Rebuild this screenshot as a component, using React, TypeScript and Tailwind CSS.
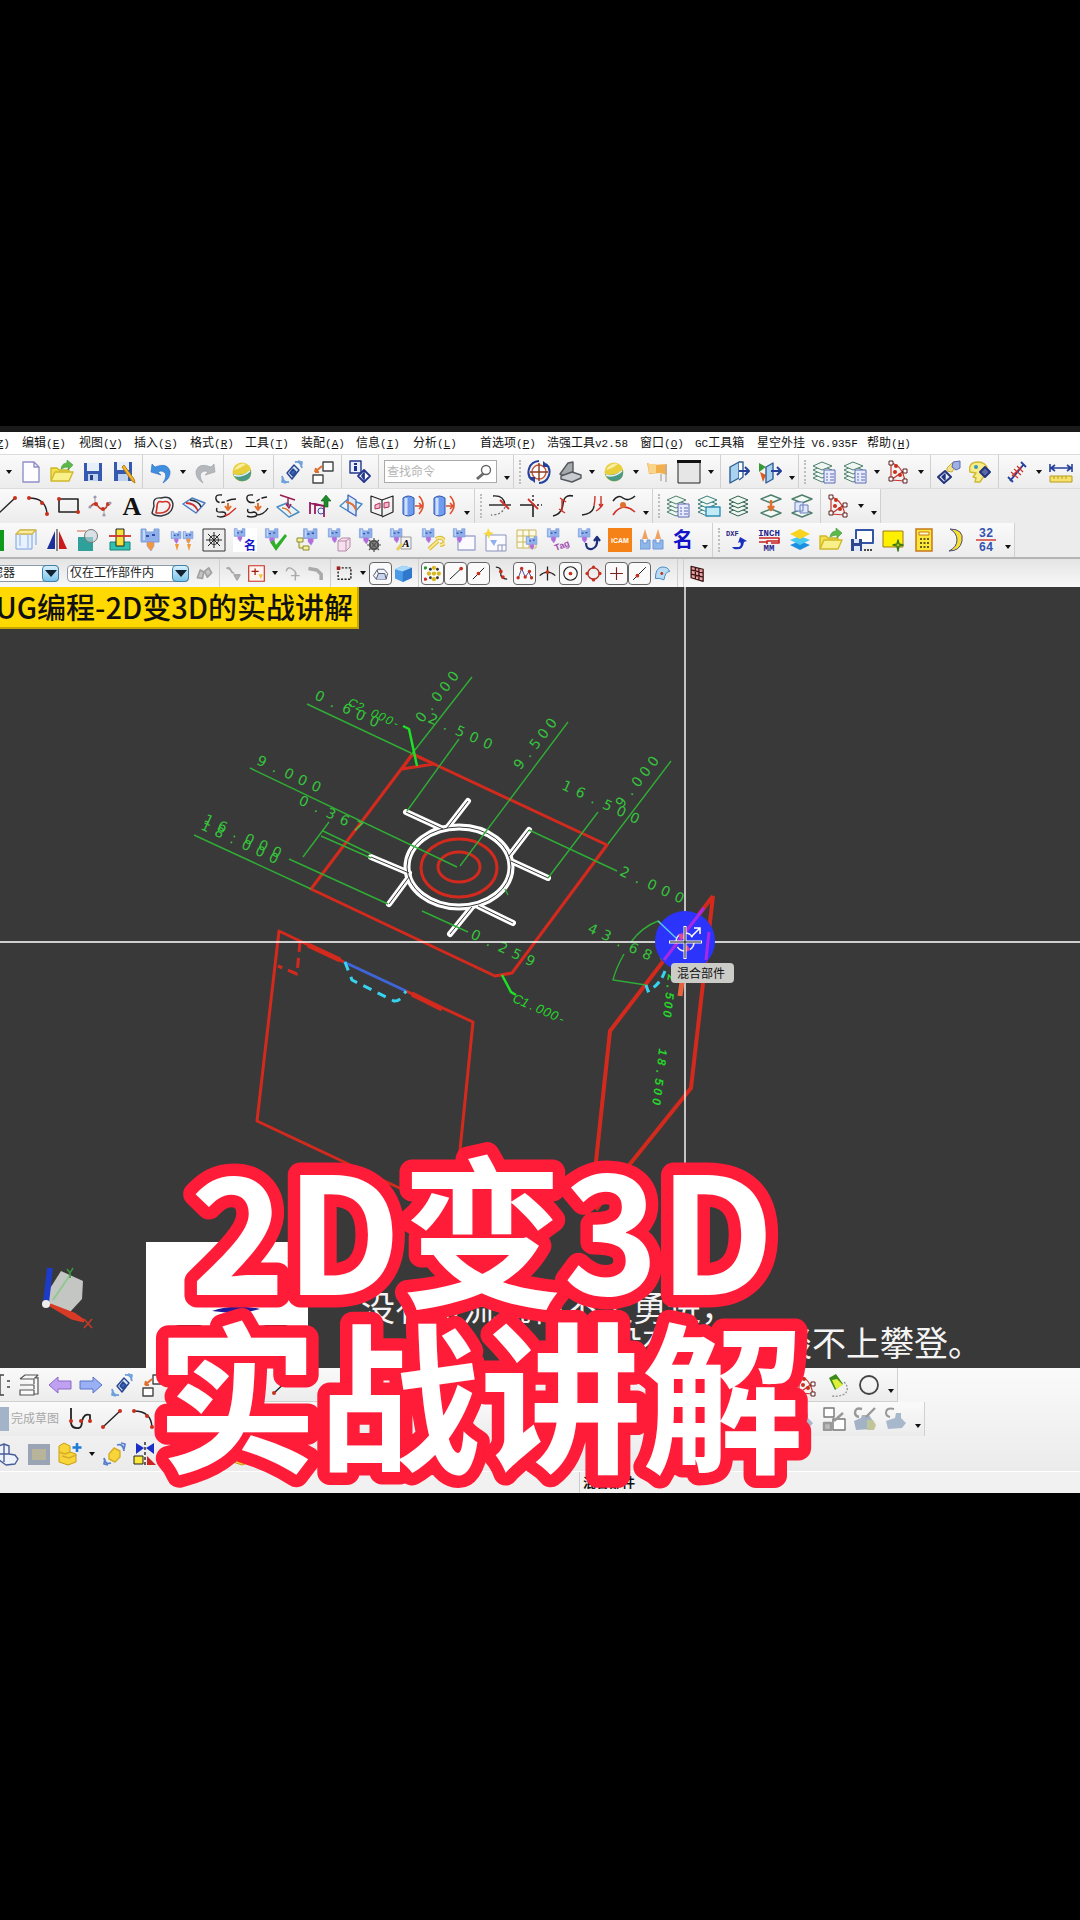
import type { ReactNode } from 'react'

type PProps = { d: string; c?: string; f?: string; w?: number; dash?: string }

function P({ d, c = '#222', f = 'none', w = 1.4, dash }: PProps) {
  return <path d={d} stroke={c} fill={f} strokeWidth={w} strokeDasharray={dash} strokeLinejoin="round" />
}

function Dots({ at, c = '#c8301c', r = 2 }: { at: number[][]; c?: string; r?: number }) {
  return (
    <>
      {at.map(([x, y]) => (
        <circle key={`${x}-${y}`} cx={x} cy={y} r={r} fill={c} />
      ))}
    </>
  )
}

// clamp head used by most of the tooling commands
function Bot({ x = 0, y = 0, s = 1, tip = '#b56be0' }: { x?: number; y?: number; s?: number; tip?: string }) {
  return (
    <g transform={`translate(${x} ${y}) scale(${s})`}>
      <path d="M2 1h5v3h8V1h5v13H2z" fill="#8fb0ea" stroke="#7f9fdc" />
      <path d="M5 2v10" stroke="#c4d8fa" strokeWidth="2" />
      <path d="M7 8h3M13 7h3" stroke="#2d4fa8" strokeWidth="2" />
      <path d="M8 14h7v4l-3 5-4-5z" fill={tip} stroke="#a58ad0" strokeWidth=".6" />
    </g>
  )
}

function Sheets({ c = '#4f7f6c' }: { c?: string }) {
  return (
    <g fill="#eef7f2" stroke={c} strokeWidth="1">
      <path d="M1 18l9-4 10 4-10 4z" />
      <path d="M1 14l9-4 10 4-10 4z" />
      <path d="M1 10l9-4 10 4-10 4z" />
      <path d="M1 6l9-4 10 4-10 4z" />
    </g>
  )
}

function Globe() {
  return (
    <>
      <circle cx="12" cy="12" r="9.500" fill="#e9cf3c" />
      <path d="M3 14q9 3 18-4q1 8-5 10.500q-9 3-13-6.500z" fill="#4c9a86" />
      <path d="M4 10q5-8 12-6q-6 5-12 6z" fill="#f8eda0" />
      <path d="M4 15q8 3 16-4" stroke="#e7f3ff" strokeWidth="1.500" fill="none" />
    </>
  )
}

function Spin({ core = '#d8e4f8' }: { core?: string }) {
  return (
    <>
      <P d="M7 13l7-8 5 5-7 9z" f={core} c="#24458f" />
      <P d="M10 13l3-4 3 3-3 4z" f="#3b62b8" c="#24458f" />
      <P d="M15 2q6-1 7 6M18 1l4 1-1 5M9 22q-6 1-7-6M6 23l-4-1 1-5" c="#6fa0dc" w={1.8} />
    </>
  )
}

function Constraint() {
  return (
    <>
      <P d="M4 3v17l14 1M4 3q11 2 14 18M4 20l14-10" c="#c8322c" w={1.2} />
      <P d="M2 1h4v4H2zM2 17h4v4H2zM16 9h4v4h-4zM16 19h4v4h-4z" f="#fff" c="#5c2020" w={1} />
      <Dots at={[[9, 6], [8, 12], [13, 15]]} />
    </>
  )
}

const icons: Record<string, ReactNode> = {
  newFile: <P d="M4 2h11l5 5v15H4zM15 2v5h5" f="#fdfdff" c="#8f8fc8" />,
  open: (
    <>
      <P d="M1 20V8h6l2 2h10v10z" f="#f2e14c" c="#d0b828" />
      <P d="M1 21l4-9h18l-4 9z" f="#faf08a" c="#d0b828" />
      <path d="M11 9q1-6 6-6V0l6 5-5 5V7q-3 0-7 2z" fill="#5cb848" stroke="#3a9a35" strokeWidth=".6" />
    </>
  ),
  save: (
    <>
      <path d="M3 3h18v18H3z" fill="#3558b0" />
      <path d="M6 3h12v8H6z" fill="#e6effa" />
      <path d="M7 14h10v7H7z" fill="#bcd2ee" />
      <path d="M9 15h3v5H9z" fill="#22408a" />
    </>
  ),
  saveAs: (
    <>
      <path d="M2 2h18v19H2z" fill="#3558b0" />
      <path d="M5 2h12v8H5z" fill="#e6effa" />
      <path d="M6 14h10v7H6z" fill="#bcd2ee" />
      <P d="M10 7l10 14 3 2-1-4L12 5z" f="#f5b82e" c="#b87a10" w={1} />
    </>
  ),
  undo: <path d="M2 12l1-8 3 3q12-5 15 4q1 7-7 12q5-8 1-11q-3-2-6 0l3 3z" fill="#3f8fe0" stroke="#2c6cc0" strokeWidth=".6" />,
  redo: <path d="M22 12l-1-8-3 3q-12-5-15 4q-1 7 7 12q-5-8-1-11q3-2 6 0l-3 3z" fill="#b4b8bd" stroke="#9a9ea4" strokeWidth=".6" />,
  globe: <Globe />,
  spin: <Spin />,
  windows: (
    <>
      <P d="M12 2h10v9H12zM2 15h10v8H2z" f="#fff" c="#444" />
      <P d="M4 12l7-6M4 12l1-4M4 12h4" c="#e0702c" w={2} />
    </>
  ),
  info: (
    <>
      <P d="M2 1h11v12H2z" f="#e9efff" c="#24378c" />
      <path d="M6 3h3v2H6zM6 6h3v5H6z" fill="#1c2f86" />
      <P d="M16 10l6 6-6 6-6-6zM16 13l-2 3 2 3z" f="#fff" c="#24378c" w={1.8} />
    </>
  ),
  orient: (
    <>
      <circle cx="12" cy="12" r="7" fill="#fff" stroke="#c45a3c" strokeWidth="1.400" />
      <P d="M12 3v18M3 12h18" c="#8c3a20" />
      <P d="M5 20A11 11 0 0 1 12 1M19 4a11 11 0 0 1-7 19" c="#24409a" w={2} />
      <path d="M1 17h7v6zM23 7h-7V1z" fill="#24409a" />
    </>
  ),
  laptop: (
    <>
      <P d="M2 14L10 3l5-1v10l-9 4z" f="#a4a9ae" c="#55595e" />
      <P d="M3 16l11-4 9 3v3l-9 4-11-3z" f="#c8ccd0" c="#55595e" />
    </>
  ),
  flag: (
    <>
      <path d="M1 3l6 2 14-1v11l-7-2-11 1z" fill="#f3b04a" />
      <path d="M2 4h8v9H3z" fill="#f9d58c" />
      <P d="M20 5v17M15 14v7" c="#b0b0b0" />
    </>
  ),
  frame: (
    <>
      <path d="M1 1h22v22H1z" fill="#e6e6e6" stroke="#222" />
      <path d="M0 0h24v3H0z" fill="#111" />
    </>
  ),
  exit: (
    <>
      <P d="M3 7l9-5v16l-9 5z" f="#a9d2f0" c="#2f5f96" />
      <P d="M12 2h4v15l-4 3" f="#fff" c="#2f5f96" />
      <P d="M12 11h9M18 7l4 4-4 4" c="#24409a" w={2} />
    </>
  ),
  exitAll: (
    <>
      <path d="M1 3l7 4-7 5z" fill="#3a9a35" />
      <path d="M2 12l6 3-3 7z" fill="#e05a20" />
      <P d="M8 7l7-4v16l-7 4z" f="#a9d2f0" c="#2f5f96" />
      <P d="M13 11h9M19 7l4 4-4 4" c="#24409a" w={2} />
    </>
  ),
  layerSet: (
    <>
      <Sheets />
      <P d="M12 10h11v13H12zM14 14h2M18 14h4M14 17h2M18 17h4M14 20h2M18 20h4" f="#e8ebff" c="#5a6bb4" w={1} />
    </>
  ),
  layerView: (
    <>
      <Sheets c="#3a7c7c" />
      <P d="M9 13h14v9H9z" f="#bfeaf6" c="#2f8fb4" />
    </>
  ),
  layers: <Sheets c="#2f5f4c" />,
  layerMove: (
    <>
      <P d="M2 5l10-4 10 4-10 4zM2 19l10-4 10 4-10 4z" f="#f4fbf7" c="#4f7f6c" />
      <P d="M12 6v9M9 12l3 4 3-4" c="#e0702c" w={2.4} />
    </>
  ),
  layerCopy: (
    <>
      <P d="M2 5l10-4 10 4-10 4zM2 19l10-4 10 4-10 4z" f="#f4fbf7" c="#4f7f6c" />
      <P d="M5 8h8v9H5zM10 11h8v8h-8z" f="#dfe8ff" c="#6a7fb8" w={1} />
    </>
  ),
  constraint: <Constraint />,
  tagHand: (
    <>
      <P d="M10 8l5-5 4 3-4 6-5-1z" f="#f4e08a" c="#c8b040" w={1} />
      <path d="M16 2l7-1v7l-4 2-4-3z" fill="#9fb0e4" stroke="#5a6ab0" />
      <P d="M8 11l6 6-7 6-6-6z" f="#e6ebfb" c="#25357c" w={2} />
      <P d="M8 14l-3 3 3 3z" f="#25357c" c="#25357c" />
    </>
  ),
  tagMask: (
    <>
      <P d="M2 12Q0 2 10 2q8 0 10 8l-8 12H7l1-4-3-1 3-4z" f="#f7ec8c" c="#d0b830" />
      <Dots at={[[8, 7]]} c="#3a9ab4" />
      <P d="M17 7l5 5-5 5-5-5z" f="#5a6aa8" c="#25357c" w={2} />
    </>
  ),
  measure: (
    <>
      <P d="M5 21L19 4M3 17l5 5M16 2l5 5" c="#25409a" w={1.8} />
      <P d="M6 12l7 6M9 9l7 6M12 6l6 6M7 16l9-9" c="#d03028" w={1.2} />
    </>
  ),
  ruler: (
    <>
      <P d="M1 4v8M23 4v8M2 8h20M6 5L2 8l4 3M18 5l4 3-4 3" c="#25409a" w={1.6} />
      <P d="M1 16h22v6H1zM5 16v3M9 16v3M13 16v3M17 16v3" f="#f6e26a" c="#b89a20" w={1} />
    </>
  ),
  line: (
    <>
      <P d="M3 20L20 4" />
      <Dots at={[[3, 20], [20, 4]]} />
    </>
  ),
  arc: (
    <>
      <P d="M3 4Q20 4 21 20" />
      <Dots at={[[3, 4], [16, 9], [21, 20]]} />
    </>
  ),
  rect: (
    <>
      <P d="M2 5h19v13H2z" w={1.6} />
      <Dots at={[[2, 5], [21, 18]]} />
    </>
  ),
  spline: (
    <>
      <P d="M7 3v8l-5 1M7 11l9 5 4-7M16 16v5" c="#b8b8b8" />
      <P d="M3 12q4-5 7 0t8 2l2-4" c="#c8301c" />
      <Dots at={[[8, 10], [15, 15], [20, 10]]} />
      <Dots at={[[7, 3], [2, 13], [16, 21], [22, 9]]} c="#9a9ab0" r={1.6} />
    </>
  ),
  letter: (
    <text x="12" y="21" fontSize="26" fontWeight="700" textAnchor="middle" fontFamily="Liberation Serif, serif" fill="#111">
      A
    </text>
  ),
  offset: (
    <>
      <P d="M3 12Q1 3 10 4q10-3 12 6q0 10-12 12q-7 0-9-3z" c="#33363c" />
      <P d="M6 13q0-7 5-5q7-2 8 3q-1 7-9 8H5z" c="#d03028" w={1.6} />
    </>
  ),
  project: (
    <>
      <P d="M1 10L10 4l13 5-9 10z" f="#e8f0fc" c="#4a7cc0" />
      <P d="M4 9q9 0 12 8" c="#d03028" w={1.8} />
      <P d="M8 6q9 1 11 7" c="#222" />
    </>
  ),
  bridge: (
    <>
      <P d="M8 1Q1 0 2 5t9 3q5-3 11-3" dash="14 2 3 2" />
      <P d="M3 14q-2 5 5 4 5 0 3 4-5 2-8 0" />
      <P d="M14 9v5M11 12l3 4 3-4" c="#e0702c" w={2} />
      <P d="M11 22l4-2 7-6" c="#d03028" />
    </>
  ),
  bridge2: (
    <>
      <P d="M8 1Q1 0 2 5t9 3q3-4 11-5" dash="18 2 4 2" />
      <P d="M3 15q-2 5 6 3 4 1 2 4-5 2-9 0M11 21q8 0 12-7" />
      <P d="M13 9v5M10 12l3 4 3-4" c="#e0702c" w={2} />
    </>
  ),
  plane: (
    <>
      <P d="M1 13l10-4 12 9-10 5z" f="#eaf4fb" c="#4a8cc0" />
      <P d="M6 14q6 0 9 6" c="#e0702c" />
      <P d="M4 1l15 5M12 4v8M10 10l3 4 2-4" c="#9a1c50" />
    </>
  ),
  combine: (
    <>
      <P d="M2 8v12M2 9l14 3M7 20V9M16 12v11" c="#9a1c60" w={1.8} />
      <circle cx="13" cy="17" r="3" fill="none" stroke="#3a4ab0" />
      <path d="M18 1l5 6h-3v6h-4V7h-3z" fill="#1f8a2a" stroke="#0f5f18" strokeWidth=".6" />
    </>
  ),
  section: (
    <>
      <P d="M1 12L9 5l14 5-9 10z" f="#eef5fb" c="#4a8cc0" />
      <P d="M9 1v16l8 5V6z" f="#dceafa" c="#4a6cc0" />
      <P d="M7 8q8 1 10 8" c="#e0702c" w={2} />
    </>
  ),
  mirrorFace: (
    <>
      <P d="M1 2l11 4v16L1 18z" f="#f6f6f6" w={1.2} />
      <P d="M12 6l11-4v16l-11 5" w={1.2} />
      <P d="M5 11l5-2v5l-5 1zM14 9l5-1v5l-5 1z" f="#f4b8cc" c="#b8305c" w={1} />
    </>
  ),
  cyl: (
    <>
      <path d="M1 4q5-4 11 0v16q-6 4-11 0z" fill="#6f9cf0" stroke="#2f56a8" />
      <path d="M4 4v17" stroke="#cfe0ff" strokeWidth="3" />
      <P d="M17 2q8 9 0 18M13 12h7M17 9l3 3-3 3" c="#e0502c" w={1.6} />
    </>
  ),
  trim: (
    <>
      <P d="M1 11h22" />
      <P d="M5 2q11-1 12 9" />
      <P d="M17 13q-3 8-14 8" dash="2 2" c="#777" />
      <P d="M12 6l9 9" c="#d03028" w={1.8} />
    </>
  ),
  corner: (
    <>
      <P d="M1 11h13v12" w={1.6} />
      <P d="M14 1v9M14 11h9" dash="2 2" />
      <P d="M9 5l10 10" c="#d03028" w={1.8} />
    </>
  ),
  curve: (
    <>
      <P d="M23 2q-9-2-10 8t-10 12" w={1.6} />
      <P d="M10 4l6 4M9 15l6 4M12 5v12" c="#d03028" />
    </>
  ),
  stretch: (
    <>
      <P d="M1 21q11-1 12-9" />
      <P d="M13 12q1-5 1-10M20 2v10q0 2-5 5M18 10l2 3 2-3" c="#d03028" />
    </>
  ),
  smooth: (
    <>
      <P d="M1 7q5-7 10-3t12-2" w={1.6} />
      <P d="M1 21q9-14 22-3" c="#d03028" w={1.6} />
      <Dots at={[[11, 11]]} c="#e0702c" r={3} />
    </>
  ),
  green: <path d="M0 2h21v21H0z" fill="#0f9a1c" />,
  glass: (
    <>
      <P d="M2 6h16v15H2zM6 2h16v15" f="#e6f2ff" c="#7aa0dc" w={1} />
      <P d="M2 6l4-4h16l-4 4z" f="#f8eda0" c="#d8b840" />
      <P d="M6 6v12M14 6v14" c="#a8c0ee" />
    </>
  ),
  mirror: (
    <>
      <path d="M10 3v18H2z" fill="#1c2f9a" />
      <path d="M14 3v18h8z" fill="#c81c1c" />
      <P d="M12 1v22" w={1} />
    </>
  ),
  bool: (
    <>
      <path d="M2 9h15v14H2z" fill="#2fa09a" />
      <circle cx="15" cy="8" r="6.500" fill="#c8d4dc" fillOpacity=".6" stroke="#777" />
      <P d="M1 3h9" c="#d8907c" />
    </>
  ),
  base: (
    <>
      <path d="M2 14h20v8H2z" fill="#2fc0b0" stroke="#1c8078" />
      <path d="M8 1h8v17H8z" fill="#f6e23a" stroke="#222" />
      <P d="M1 8h22" c="#d03028" w={1.8} />
    </>
  ),
  bot: <Bot tip="#f09a3a" />,
  bots: (
    <>
      <Bot s={0.55} y={3} x={0} tip="#b56be0" />
      <Bot s={0.55} y={3} x={12} tip="#f09a3a" />
      <path d="M5 16l2 7 2-7zM17 16l2 7 2-7z" fill="#f09a3a" />
    </>
  ),
  star: (
    <>
      <path d="M1 1h22v22H1z" fill="#eee" stroke="#333" />
      <P d="M12 4v16M4 12h16M6 6l12 12M18 6L6 18" w={1} />
      <circle cx="12" cy="12" r="4.500" fill="none" stroke="#333" />
    </>
  ),
  botName: (
    <>
      <path d="M0 0h24v24H0z" fill="#fff" />
      <Bot s={0.6} />
      <text x="17" y="22" fontSize="12" fontWeight="700" textAnchor="middle" fontFamily="Noto Sans CJK SC, sans-serif" fill="#1414c8">
        名
      </text>
    </>
  ),
  botCheck: (
    <>
      <Bot s={0.7} />
      <path d="M6 14l4-2 2 5 9-11 2 2-11 15z" fill="#2fae2a" />
    </>
  ),
  botTree: (
    <>
      <Bot s={0.75} x={7} />
      <P d="M2 10h6v4H2zM8 18h6v4H8zM4 14v6h4" f="#f7f29a" c="#8a8a30" w={1} />
    </>
  ),
  botBox: (
    <>
      <Bot s={0.65} />
      <P d="M11 13l4-3h8v9l-4 4h-8zM11 13h8v10M19 13l4-3" f="#f6e0ee" c="#b88aa8" w={1} />
    </>
  ),
  botGear: (
    <>
      <Bot s={0.7} />
      <circle cx="16" cy="17" r="4" fill="none" stroke="#555" strokeWidth="2.500" />
      <P d="M16 10v14M9 17h14M11 12l10 10M21 12L11 22" c="#555" w={1.2} />
    </>
  ),
  botText: (
    <>
      <Bot s={0.65} />
      <P d="M12 9h10v12H12z" f="#f2f2f2" c="#999" w={1} />
      <text x="17" y="19" fontSize="11" fontStyle="italic" fontWeight="700" textAnchor="middle" fontFamily="Liberation Serif, serif">
        A
      </text>
      <P d="M8 22l5-6" c="#e6d25a" w={3} />
    </>
  ),
  botWrench: (
    <>
      <Bot s={0.65} />
      <P d="M8 21l9-8M15 11q5-3 8 1t-4 5" c="#d8b83a" w={4} />
      <P d="M8 21l9-8M15 11q5-3 8 1t-4 5" c="#f8e88a" w={2} />
    </>
  ),
  botPage: (
    <>
      <P d="M6 8h17v14H6z" f="#fbfbff" c="#a0a8d0" />
      <Bot s={0.65} />
    </>
  ),
  botNew: (
    <>
      <P d="M3 7h20v16H3zM15 17h8M15 17v6M19 17v6" f="#fafaff" c="#8a93b8" w={1} />
      <path d="M5 0l2 4 4 1-4 2-1 4-2-4-4-1 4-2z" fill="#f6d83a" />
      <path d="M7 12h7l-3 6z" fill="#8fb0ea" />
    </>
  ),
  botGrid: (
    <>
      <P d="M2 2h19v18H2zM2 8h19M2 14h19M8 2v18M14 2v18" f="#fdfbe8" c="#c8b860" w={1} />
      <Bot s={0.6} x={10} y={8} />
    </>
  ),
  botTag: (
    <>
      <Bot s={0.65} />
      <text x="9" y="22" fontSize="9" fontWeight="700" fontFamily="Liberation Sans, sans-serif" fill="#a04ab0" transform="rotate(-20 12 20)">
        Tag
      </text>
    </>
  ),
  botTurn: (
    <>
      <Bot s={0.65} />
      <P d="M9 15q0 7 6 6 6-2 5-10M17 13l3-4 3 4" c="#1c2f7a" w={2.2} />
    </>
  ),
  icam: (
    <>
      <path d="M0 0h24v24H0z" fill="#f58216" />
      <text x="12" y="15" fontSize="7" fontWeight="700" textAnchor="middle" fontFamily="Liberation Sans, sans-serif" fill="#fff">
        iCAM
      </text>
    </>
  ),
  pair: (
    <>
      <path d="M0 12h3v3h4v-3h3v9H0zM13 12h3v3h4v-3h3v9H13z" fill="#8fb8ea" stroke="#6f98d8" />
      <path d="M5 1l3 10H2zM18 1l3 10h-6z" fill="#f0a060" />
    </>
  ),
  name: (
    <text x="12" y="19" fontSize="20" fontWeight="700" textAnchor="middle" fontFamily="Noto Sans CJK SC, sans-serif" fill="#1212c8">
      名
    </text>
  ),
  dxf: (
    <>
      <text x="0" y="8" fontSize="7" fontWeight="700" fontFamily="Liberation Mono, monospace" fill="#24247c">
        DXF
      </text>
      <path d="M6 19h7q3-2 1-5l-2 1 2-6 7 4-3 1q-1 9-10 7z" fill="#1c30c0" />
    </>
  ),
  inch: (
    <>
      <text x="12" y="8" fontSize="9" fontWeight="700" textAnchor="middle" fontFamily="Liberation Mono, monospace" fill="#24248c">
        INCH
      </text>
      <P d="M2 10h20v3H10v3M2 14h8M22 13v2h-8" c="#c82020" w={1.6} />
      <text x="12" y="23" fontSize="9" fontWeight="700" textAnchor="middle" fontFamily="Liberation Mono, monospace" fill="#24248c">
        MM
      </text>
    </>
  ),
  stack: (
    <>
      <path d="M2 17l10-4 10 4-10 5z" fill="#1c8fe0" />
      <path d="M2 12l10-4 10 4-10 5z" fill="#4ac8f0" />
      <path d="M2 6l10-5 10 5-10 5z" fill="#f8d420" />
    </>
  ),
  screenSave: (
    <>
      <P d="M6 2h17v13H6z" f="#fff" c="#3454a8" w={2} />
      <path d="M1 11h11v12H1z" fill="#2c4890" />
      <path d="M4 11h5v4H4zM4 18h6v5H4z" fill="#dfe8f8" />
      <Dots at={[[15, 22], [18, 22], [21, 22]]} c="#111" r={1} />
    </>
  ),
  note: (
    <>
      <path d="M2 3h20v16H2z" fill="#fdf000" stroke="#a07818" />
      <P d="M17 12l1 4 4 1-4 1-1 5-1-5-4-1 4-1z" f="#fdf000" c="#3a7a1c" />
    </>
  ),
  calc: (
    <>
      <path d="M4 1h16v22H4z" fill="#fbe63a" stroke="#c87818" strokeWidth="1.500" />
      <path d="M7 4h10v3H7z" fill="#fffbd0" stroke="#c87818" />
      <P d="M8 11h9M8 15h9M8 19h9" c="#6a5a10" w={2} dash="2 1.5" />
    </>
  ),
  moon: <path d="M7 1q14 0 12 12-2 10-13 10 8-4 8-11 0-7-7-11z" fill="#f8e030" stroke="#4a4a7a" />,
  frac: (
    <g fontSize="12" fontWeight="700" textAnchor="middle" fontFamily="Liberation Mono, monospace" fill="#3454b0">
      <text x="12" y="9">
        32
      </text>
      <path d="M2 12h20" stroke="#d03028" strokeWidth="1.400" />
      <text x="12" y="23">
        64
      </text>
    </g>
  ),
  grayLink: <P d="M2 18l4-11 5 3-2 9zM12 9l6-5 4 7-6 6z" f="#c4c4c4" c="#a0a0a0" w={2.4} />,
  grayPick: <P d="M2 5q4-3 6 2t5 4M13 14h8l-4 7z" f="#b4bcb0" c="#a8a8a8" w={2.4} />,
  redPlus: (
    <>
      <path d="M1 1h22v22H1z" fill="#fff4f0" stroke="#c82c20" strokeWidth="1.600" />
      <P d="M10 5v9M5 9h10" c="#a01c10" w={1.8} />
      <path d="M15 13h6l-3 7z" fill="#f0c83a" />
    </>
  ),
  grayTurn: <P d="M3 9q2-8 9-3t4 9M10 15h12M16 9v13" c="#aaa" w={2} />,
  grayPipe: <P d="M2 5l12 2 6 6v8" c="#aaa" w={5} />,
  marquee: (
    <>
      <P d="M3 4h18v16H3z" dash="3 2" w={2} />
      <path d="M1 2h5v5H1z" fill="#a02020" />
    </>
  ),
  cubeW: (
    <>
      <P d="M2 15l6-9h9l5 6-2 8H6z" f="#f3f5fa" c="#555c70" />
      <P d="M6 20l3-8h9l2 8M9 12l-2-5" f="#c8d4ee" c="#555c70" />
    </>
  ),
  cubeB: (
    <>
      <path d="M0 6l11-5 13 3v14l-13 6-11-5z" fill="#4a9ae8" />
      <path d="M0 6l11-5 13 3-13 5z" fill="#a8d8fa" />
      <path d="M11 9l13-5v14l-13 6z" fill="#2f78cc" />
    </>
  ),
  snap: (
    <>
      <Dots at={[[14, 4], [14, 20], [7, 12], [21, 12], [14, 12]]} c="#d8b81c" r={3} />
      <Dots at={[[9, 6], [19, 18], [19, 6], [9, 18]]} c="#333" r={2} />
      <Dots at={[[2, 4]]} c="#2a9a2a" r={2.4} />
      <Dots at={[[2, 20]]} r={2.4} />
    </>
  ),
  endPt: (
    <>
      <P d="M4 20L20 5" />
      <Dots at={[[20, 5]]} r={2.6} />
    </>
  ),
  midPt: (
    <>
      <P d="M4 20L20 4" />
      <Dots at={[[12, 12]]} r={2.6} />
    </>
  ),
  ctrlPt: (
    <>
      <P d="M4 3q8 0 7 8t9 9" w={1.8} />
      <Dots at={[[11, 9], [14, 17]]} r={2.6} />
    </>
  ),
  polePt: (
    <>
      <P d="M3 19L8 5l5 12 5-7 4 8" c="#5a4a9a" />
      <Dots at={[[3, 18], [8, 5], [13, 17], [19, 9], [22, 18]]} r={2.4} />
    </>
  ),
  crossPt: (
    <>
      <P d="M1 15q11-10 22 0M12 2v20" w={1.8} />
      <Dots at={[[12, 10]]} r={2.6} />
    </>
  ),
  circPt: (
    <>
      <circle cx="12" cy="12" r="9.500" fill="none" stroke="#222" strokeWidth="1.600" />
      <Dots at={[[12, 12]]} r={2.6} />
    </>
  ),
  quadPt: (
    <>
      <circle cx="12" cy="12" r="8" fill="none" stroke="#b02c20" strokeWidth="1.800" />
      <Dots at={[[12, 3], [12, 21], [3, 12], [21, 12]]} r={2.4} />
    </>
  ),
  plusPt: <P d="M12 3v18M3 12h18" c="#7a2018" w={1.6} />,
  onPt: (
    <>
      <P d="M3 21L21 3" />
      <Dots at={[[9, 15]]} r={2.6} />
    </>
  ),
  facePt: (
    <>
      <P d="M2 19q0-14 8-16 10-1 12 6-6 0-8 12-6-3-12-2z" f="#b8dcf6" c="#4a8cc0" />
      <Dots at={[[11, 12]]} />
    </>
  ),
  grid: (
    <>
      <path d="M3 2l17 4v17L3 18z" fill="#e8a0a0" />
      <P d="M3 2l17 4v17L3 18zM3 7l17 4M3 13l17 4M9 3v17M14 5v16" c="#3a1414" w={1.8} />
    </>
  ),
  axis: <P d="M14 2v20M10 2h8M10 22h8M21 8h3M21 14h3" c="#444" />,
  notes: <P d="M10 2h11l-3 3M3 6l5-4h13M21 4v16M3 6h14v5M3 12h14v4M3 17h14v5H3zM17 5h4v16h-4" f="#fafafa" c="#555" w={1.2} />,
  back: <path d="M1 12l9-8v4h13v8H10v4z" fill="#c0a0f0" stroke="#8a6ac8" />,
  next: <path d="M23 12l-9-8v4H1v8h13v4z" fill="#9ab0f4" stroke="#5a74c8" />,
  finish: <path d="M0 0h24v24H0z" fill="#a4b4c8" />,
  profile: (
    <>
      <P d="M2 1v15q1 6 8 5 3-1 3-7 2-8 8-6v6" w={1.8} />
      <Dots at={[[2, 14], [12, 14], [21, 14]]} />
    </>
  ),
  blocks: <P d="M3 4l5-2 5 2v8l6 1 3 4-3 5-9 1-7-5zM3 12h10M8 2v18" f="#eef2fb" c="#4a5c98" />,
  shot: (
    <>
      <path d="M1 2h22v21H1z" fill="#9aa4b4" />
      <path d="M5 7h14v11H5z" fill="#b8b49a" />
    </>
  ),
  addPart: (
    <>
      <path d="M1 4l5-3 6 3v6l6 2v8l-8 3-9-3z" fill="#f8d63a" stroke="#c89c18" />
      <P d="M1 10l6 2 5-2M4 14l7 2 7-3" c="#d8ac28" />
      <P d="M19 1v9M14.500 5.500h9" c="#1c7cd8" w={2.6} />
    </>
  ),
  spinPart: (
    <>
      <P d="M7 12l5-6 6 3v6l-5 5-6-3z" f="#f8d63a" c="#d8ac28" />
      <P d="M15 3q6-2 7 6M19 1l4 1-1 5M9 21q-6 2-7-5M6 23l-4-1 1-5" c="#5a80cc" w={1.8} />
    </>
  ),
  mirrorPart: (
    <>
      <path d="M3 1l8 5-8 6zM21 1l-8 5 8 6z" fill="#1c30c8" />
      <path d="M1 14h9v8H1z" fill="#f8e83a" stroke="#222" />
      <path d="M14 14l9 9h-9z" fill="#d02020" />
      <P d="M12 0v24" dash="3 2" />
    </>
  ),
  lamp: (
    <>
      <path d="M3 5l7-4 7 10-8 6z" fill="#3a8a1c" />
      <path d="M6 7l5-1 6 6-7 4z" fill="#e0f03a" />
      <P d="M18 9q6 6 1 12-7 3-13 2" c="#999" dash="2 1.5" />
    </>
  ),
  ring: <circle cx="12" cy="12" r="9" fill="none" stroke="#444" strokeWidth="1.800" />,
  grayBoxes: (
    <>
      <P d="M2 1h10v9H2zM11 12h12v11H11z" f="#fff" c="#777" />
      <P d="M2 16h7v7H2zM12 14l9-8" f="#bbb" c="#999" w={2.4} />
    </>
  ),
  graySnap: (
    <>
      <path d="M1 14l7-3 1-3h7l4 6-2 8-15 1z" fill="#a4b2c6" />
      <path d="M14 13h6l3 5-2 5h-7z" fill="#c0c49a" />
      <P d="M9 2Q2 0 2 6q0 3 4 4M13 10l9-9" c="#999" w={2.4} />
    </>
  ),
  graySnap2: (
    <>
      <path d="M2 14l9-3 1-5h5v5l5 5-4 5-14 1z" fill="#a8b8cc" />
      <P d="M10 2Q2 0 2 6q0 3 4 4" c="#999" w={2} />
    </>
  ),
}

function Icon({ name, className }: { name: string; className: string }) {
  return (
    <svg viewBox="0 0 24 24" className={className} aria-hidden="true">
      {icons[name]}
    </svg>
  )
}

function Caret({ low = false }: { low?: boolean }) {
  return (
    <button type="button" aria-label="More" className={`flex h-full w-[13px] shrink-0 justify-center ${low ? 'items-end pb-2' : 'items-center'}`}>
      <svg viewBox="0 0 6 4" className="h-1 w-1.5">
        <path d="M0 0h6L3 4z" fill="#111" />
      </svg>
    </button>
  )
}

// '|' separator, ':' grip, 'v' menu caret, '_' overflow caret
function Items({ list }: { list: string }) {
  return (
    <>
      {list.split(' ').map((name, i) => {
        if (name === '|') {
          return (
            <span key={i} className="flex h-full w-1.5 shrink-0 justify-center">
              <span className="w-px bg-[#d0d0d0]" />
            </span>
          )
        }
        if (name === ':') {
          return (
            <span key={i} className="flex h-full w-2.5 shrink-0 items-center justify-end border-l border-[#d0d0d0] pr-0.5">
              <span className="h-6 border-l-2 border-dotted border-[#bdbdbd]" />
            </span>
          )
        }
        if (name === 'v' || name === '_') return <Caret key={i} low={name === '_'} />
        return (
          <button key={i} type="button" aria-label={name} className="flex h-full w-[31px] shrink-0 items-center justify-center">
            <Icon name={name} className="size-6" />
          </button>
        )
      })}
    </>
  )
}

function SnapItems({ list, boxed }: { list: string; boxed?: string }) {
  const on = boxed ? boxed.split(' ') : []
  return (
    <>
      {list.split(' ').map((name) => (
        <button
          key={name}
          type="button"
          aria-label={name}
          className={`flex h-[23px] w-[23px] shrink-0 items-center justify-center ${on.includes(name) ? 'rounded-sm border border-[#666] bg-[#fafafa]' : ''}`}
        >
          <Icon name={name} className="size-[17px]" />
        </button>
      ))}
    </>
  )
}

const bar = 'flex h-[34px] items-center overflow-hidden bg-linear-to-b from-[#fafafa] to-[#ececec]'

const menus = [
  { label: '定', key: 'Z', width: 'w-[56px] -ml-[34px]' },
  { label: '编辑', key: 'E', width: 'w-[57px]' },
  { label: '视图', key: 'V', width: 'w-[55px]' },
  { label: '插入', key: 'S', width: 'w-[56px]' },
  { label: '格式', key: 'R', width: 'w-[55px]' },
  { label: '工具', key: 'T', width: 'w-[56px]' },
  { label: '装配', key: 'A', width: 'w-[55px]' },
  { label: '信息', key: 'I', width: 'w-[57px]' },
  { label: '分析', key: 'L', width: 'w-[67px]' },
  { label: '首选项', key: 'P', width: 'w-[67px]' },
  { label: '浩强工具', tail: 'v2.58', width: 'w-[93px]' },
  { label: '窗口', key: 'O', width: 'w-[55px]' },
  { head: 'GC', label: '工具箱', width: 'w-[62px]' },
  { label: '星空外挂', tail: ' V6.935F', width: 'w-[110px]' },
  { label: '帮助', key: 'H', width: 'w-[60px]' },
]

function MenuBar() {
  return (
    <nav className="flex h-[23px] items-center overflow-hidden border-b border-[#dcdcdc] bg-white text-xs text-[#111]">
      {menus.map((m) => (
        <button key={m.label} type="button" className={`${m.width} shrink-0 whitespace-pre text-left ${m.key === 'Z' ? 'pl-3' : ''}`}>
          {m.head && <span className="font-['Liberation_Mono'] text-[11px]">{m.head}</span>}
          {m.label}
          {m.tail && <span className="font-['Liberation_Mono'] text-[11px]">{m.tail}</span>}
          {m.key && (
            <span className="font-['Liberation_Mono'] text-[11px]">
              (<u>{m.key}</u>)
            </span>
          )}
        </button>
      ))}
    </nav>
  )
}

function Combo({ label, value, className }: { label: string; value: string; className: string }) {
  return (
    <div className={`relative h-[17px] shrink-0 ${className}`}>
      <select aria-label={label} className="block h-full w-full appearance-none rounded-sm border border-[#8a9aa8] bg-white pl-0.5 text-xs leading-[15px] text-[#222]">
        <option>{value}</option>
      </select>
      <span className="pointer-events-none absolute inset-y-0 right-0 flex w-[17px] items-center justify-center rounded-sm border border-[#3f7fa8] bg-linear-to-b from-[#d8f0fc] to-[#7cc4ea]">
        <svg viewBox="0 0 12 7" className="w-3">
          <path d="M0 0h12L6 7z" fill="#123" />
        </svg>
      </span>
    </div>
  )
}

function TopBars() {
  return (
    <div className="bg-[#ececec]">
      <div className={`${bar} border-b border-[#dcdcdc] pl-0.5`}>
        <Items list="v newFile open save saveAs | undo v redo | globe v | spin windows | info |" />
        <label className="mx-[3px] flex h-[23px] w-[113px] shrink-0 items-center border border-[#aaa] bg-white pr-1">
          <input type="text" aria-label="查找命令" placeholder="查找命令" className="w-0 flex-1 px-0.5 text-xs placeholder-[#b4b4b4] outline-none" />
          <svg viewBox="0 0 16 16" className="size-4" fill="none" stroke="#666" strokeWidth="1.400">
            <circle cx="10" cy="6" r="4.500" />
            <path d="M7 9l-6 5 1 1 6-5" />
          </svg>
        </label>
        <Items list="_ : orient laptop v globe v flag frame v | exit exitAll _ : layerSet layerSet v constraint v | tagHand tagMask | measure v ruler" />
      </div>
      <div className="flex">
        <div className={`${bar} w-[474px]`}>
          <div className="-ml-[9px] flex h-full flex-1 items-center justify-between">
            <Items list="line arc rect spline letter offset project bridge bridge2 plane combine section mirrorFace cyl cyl _" />
          </div>
        </div>
        <div className={`${bar} border-r border-[#d0d0d0]`}>
          <Items list=": trim corner curve stretch smooth _ : layerSet layerView layers layerMove layerCopy | constraint v _" />
        </div>
      </div>
      <div className="flex border-b-2 border-[#b4b4b4]">
        <div className={`${bar} w-[712px]`}>
          <div className="-ml-[21px] flex h-full flex-1 items-center justify-between">
            <Items list="green glass mirror bool base bot bots star botName botCheck botTree botBox botGear botText botWrench botPage botNew botGrid botTag botTurn icam pair name _" />
          </div>
        </div>
        <div className={`${bar} border-r border-[#d0d0d0]`}>
          <Items list=": dxf inch stack open screenSave note calc moon frac _" />
        </div>
      </div>
      <div className="flex h-7 items-center overflow-hidden bg-linear-to-b from-[#e4e4e4] to-[#f8f8f8]">
        <Combo label="过滤器" value="没有选择过滤器" className="-ml-[72px] mr-2 w-[131px]" />
        <Combo label="选择范围" value="仅在工作部件内" className="mr-1 w-[122px]" />
        <SnapItems list="grayLink" />
        <Items list="|" />
        <SnapItems list="grayPick redPlus" />
        <Caret />
        <SnapItems list="grayTurn grayPipe" />
        <Items list="|" />
        <SnapItems list="marquee" />
        <Caret />
        <SnapItems list="cubeW cubeB" boxed="cubeW" />
        <Items list="|" />
        <SnapItems
          list="snap endPt midPt ctrlPt polePt crossPt circPt quadPt plusPt onPt facePt"
          boxed="snap endPt midPt polePt circPt plusPt onPt"
        />
        <Items list="| |" />
        <SnapItems list="grid" />
      </div>
    </div>
  )
}

type DimProps = { x: number; y: number; a: number; t: string; pitch?: number; size?: number }

// x,y is the middle of the first character
function Dim({ x, y, a, t, pitch = 15, size = 14 }: DimProps) {
  const xs = t.split('').map((_, i) => i * pitch)
  return (
    <text x={xs.join(' ')} y={size * 0.36} fontSize={size} transform={`translate(${x} ${y}) rotate(${a})`}>
      {t}
    </text>
  )
}

const arms = 'M406 812L443 829M468 801L447 828M529 830L509 856M548 878L511 861M513 923L478 906M450 934L472 907M389 904L409 877M371 857L409 873'

function Viewport() {
  return (
    <svg viewBox="0 587 1080 781" className="block w-full bg-[#393939]">
      <g fill="none" stroke="#d42a1e" strokeWidth="4" strokeLinejoin="round">
        <path d="M311 889L402 768L413 754L434 764L607 845L512 973L495 976z" strokeWidth="3" />
        <path d="M402 769L434 764L412 754z" strokeWidth="3" />
        <ellipse cx="459" cy="868" rx="38" ry="29" strokeWidth="3" />
        <ellipse cx="459" cy="867" rx="21" ry="15" strokeWidth="3" />
        <path d="M344 962L279 931L257 1121L410 1193M406 991L473 1022L459 1160" strokeWidth="3" />
        <path d="M308 945L340 960M412 994L442 1009" strokeWidth="5" />
        <path d="M300 942L297 974L278 966" strokeDasharray="10 6" strokeWidth="3" />
        <path d="M713 896L610 1031L594 1180M713 896L691 1088L630 1164L596 1210" />
      </g>
      <path d="M344 962L406 991" stroke="#3f66d8" strokeWidth="3" />
      <path d="M345 962L352 980L394 1001Q400 1002 406 991" fill="none" stroke="#35d4f0" strokeWidth="3" strokeDasharray="9 7" />
      <g fill="none" stroke="#fff">
        <path d={arms} strokeWidth="6" strokeLinecap="round" />
        <ellipse cx="459" cy="867" rx="52" ry="40" strokeWidth="7" />
        <path d={arms} stroke="#393939" />
        <ellipse cx="459" cy="867" rx="52" ry="40" stroke="#393939" strokeWidth="1" />
      </g>
      <g fill="none" stroke="#2fae35" strokeWidth="1.400">
        <path d="M307 704L411 753M472 677L411 755M459 739L407 811M250 768L457 867M568 722L460 866" />
        <path d="M194 835L311 889M289 859L388 904M321 836L371 858M323 831L371 854M303 857L329 822" />
        <path d="M671 761L608 844M598 812L548 878M529 830L617 871M422 911L468 932M505 889l3 6" />
        <path d="M676 938L658 921Q642 927 631 942M624 954Q616 968 613 980L646 985" />
        <path d="M403 726L409 729L417 766M502 975L511 992L516 995" stroke="#1ee024" strokeWidth="2.500" />
      </g>
      <path d="M646 985l2 6q12-6 17-20M673 958l-2 12" fill="none" stroke="#35d4f0" strokeWidth="3" strokeDasharray="8 5" />
      <g fill="#35c43c" textAnchor="middle" fontFamily="DejaVu Sans, sans-serif">
        <Dim x={320} y={696} a={25} t="0.600" />
        <Dim x={421} y={717} a={-52} t="0.000" pitch={13} />
        <Dim x={433} y={719} a={24} t="2.500" />
        <Dim x={519} y={764} a={-52} t="9.500" pitch={13} />
        <Dim x={567} y={786} a={25} t="16.500" />
        <Dim x={621} y={802} a={-52} t="9.000" pitch={13} />
        <Dim x={625} y={872} a={25} t="2.000" />
        <Dim x={593} y={929} a={25} t="43.68°" />
        <Dim x={476} y={935} a={25} t="0.259" />
        <Dim x={262} y={761} a={25} t="9.000" />
        <Dim x={304} y={801} a={25} t="0.367" />
        <Dim x={206} y={826} a={25} t="18.000" />
        <Dim x={209} y={820} a={25} t="16.000" />
        <g fontStyle="italic" fontFamily="Liberation Sans, sans-serif" fill="#26d42c">
          <Dim x={353} y={703} a={25} t="C2.000-" pitch={8} size={12} />
          <Dim x={518} y={999} a={24} t="C1.000-" pitch={8} size={13} />
          <g fontWeight="700">
            <Dim x={672} y={978} a={97} t="2.500" pitch={9} size={12} />
            <Dim x={663} y={1052} a={97} t="18.500" pitch={10} size={12} />
          </g>
        </g>
      </g>

      <path d="M0 942h1080M685 587v581" stroke="#fff" strokeWidth="1.400" />
      <circle cx="685" cy="941" r="30" fill="#2c34fb" />
      <path d="M658 921L676 938" stroke="#5ac8e8" strokeWidth="1.400" />
      <path d="M704 908L664 960M709 932l-3 28" stroke="#a828e8" strokeWidth="3" />
      <circle cx="685" cy="942" r="9" fill="none" stroke="#e8e8ff" strokeWidth="1.500" strokeDasharray="9 5" />
      <path d="M680 934l3 5M686 946l2 5" stroke="#e04a9a" strokeWidth="4" />
      <path d="M669 942h33M685 926v33" stroke="#fff" strokeWidth="3" />
      <path d="M670 942h31M685 927v31" stroke="#111" strokeWidth="1" />
      <path d="M691 937L700 928M694 928h6v6" stroke="#fff" strokeWidth="1.500" fill="none" />
      <path d="M682 982l-2 14" stroke="#e8603c" strokeWidth="5" />
      <rect x="671" y="963" width="63" height="20" rx="4" fill="#cbcbc8" />
      <text x="677" y="978" fontSize="12" fontFamily="Noto Sans CJK SC, sans-serif" fill="#111">
        混合部件
      </text>

      <path d="M49 1290l12-19 22 10-1 18-12 13-21-8z" fill="#c4c6c4" />
      <path d="M53 1300L70 1275" stroke="#8fc890" strokeWidth="2" />
      <path d="M46 1303L50 1268" stroke="#1c3cc8" strokeWidth="6" />
      <path d="M50 1305L74 1314L84 1321L72 1318z" stroke="#d83a26" strokeWidth="3" fill="#d83a26" />
      <path d="M84 1319l8 9M92 1319l-8 9" stroke="#c83a26" strokeWidth="1.500" />
      <path d="M67 1269l3 4 3-5M70 1273v5" stroke="#3a9a3a" strokeWidth="1.500" fill="none" />
      <circle cx="46" cy="1304" r="4" fill="#eee" />

      <g fontSize="34" fill="#f4f4f4" fontFamily="Noto Sans CJK SC, sans-serif">
        <text x="361" y="1321">没有激流就称不上勇进，</text>
        <text x="608" y="1356">没有山峰则谈不上攀登。</text>
      </g>
      <path d="M146 1242h162v126H146z" fill="#fff" />
      <path d="M212 1311q22-8 48-2l-20 5z" fill="#24189a" />
      <path d="M174 1325h28l-8 4zM262 1325h26l-10 4z" fill="#181818" />
    </svg>
  )
}

function BottomBars() {
  return (
    <div className="bg-linear-to-b from-[#fafafa] to-[#e8e8e8]">
      <div className={`${bar} w-[898px] justify-between border-r border-b border-[#d0d0d0]`}>
        <div className="-ml-[18px] flex h-full shrink-0 items-center">
          <Items list="axis notes back next spin windows | line spin arc line" />
        </div>
        <div className="flex h-full shrink-0 items-center">
          <Items list="project corner measure ring curve constraint lamp ring _" />
        </div>
      </div>
      <div className={`${bar} w-[925px] border-r border-[#d0d0d0]`}>
        <div className="-ml-[19px] flex h-full shrink-0 items-center">
          <Items list="finish" />
        </div>
        <button type="button" className="-ml-px mr-1.5 shrink-0 text-xs text-[#a8a8a8]">
          完成草图
        </button>
        <Items list="profile line arc" />
        <div className="flex h-full flex-1 items-center justify-end">
          <Items list="graySnap2 grayBoxes graySnap graySnap2 _" />
        </div>
      </div>
      <div className="flex h-[35px] items-center overflow-hidden">
        <div className="-ml-2 flex h-full items-center">
          <Items list="blocks shot addPart v spinPart mirrorPart" />
        </div>
        <div className="ml-[68px] flex h-full items-center">
          <Items list="addPart" />
        </div>
      </div>
      <div className="flex h-[22px] items-center border-t border-white bg-[#f1f1f1] text-[13px] font-bold leading-none text-[#111]">
        <span className="h-full w-[580px] border-r border-[#ccc]" />
        <span className="pl-[3px]">混合部件</span>
      </div>
    </div>
  )
}

export default function App() {
  return (
    <div className="relative min-h-screen overflow-hidden bg-black font-['Liberation_Sans','Noto_Sans_CJK_SC',sans-serif]">
      <div className="pt-[426px]">
        <div className="h-1.5 bg-[#1a1a1a]" />
        <MenuBar />
        <TopBars />
        <div className="relative">
          <Viewport />
          <p className="absolute top-0 left-0 flex h-[42px] w-[359px] items-center justify-end overflow-hidden border-b-2 border-r-2 border-[#c8a800] bg-[#ffd900] pr-1 text-[29px] font-medium whitespace-nowrap text-[#111] font-['Noto_Sans_CJK_SC',sans-serif]">
            UG编程-2D变3D的实战讲解
          </p>
        </div>
        <BottomBars />
      </div>
      <svg viewBox="0 0 1080 1920" className="pointer-events-none absolute top-0 left-0 w-full">
        <g
          fontSize="162"
          fontWeight="700"
          fontFamily="Noto Sans CJK SC, sans-serif"
          fill="#fff"
          stroke="#ff1c38"
          strokeWidth="25"
          strokeLinejoin="round"
          paintOrder="stroke"
        >
          <text x="190" y="1295">2D变3D</text>
          <text x="156" y="1461">实战讲解</text>
        </g>
      </svg>
    </div>
  )
}
